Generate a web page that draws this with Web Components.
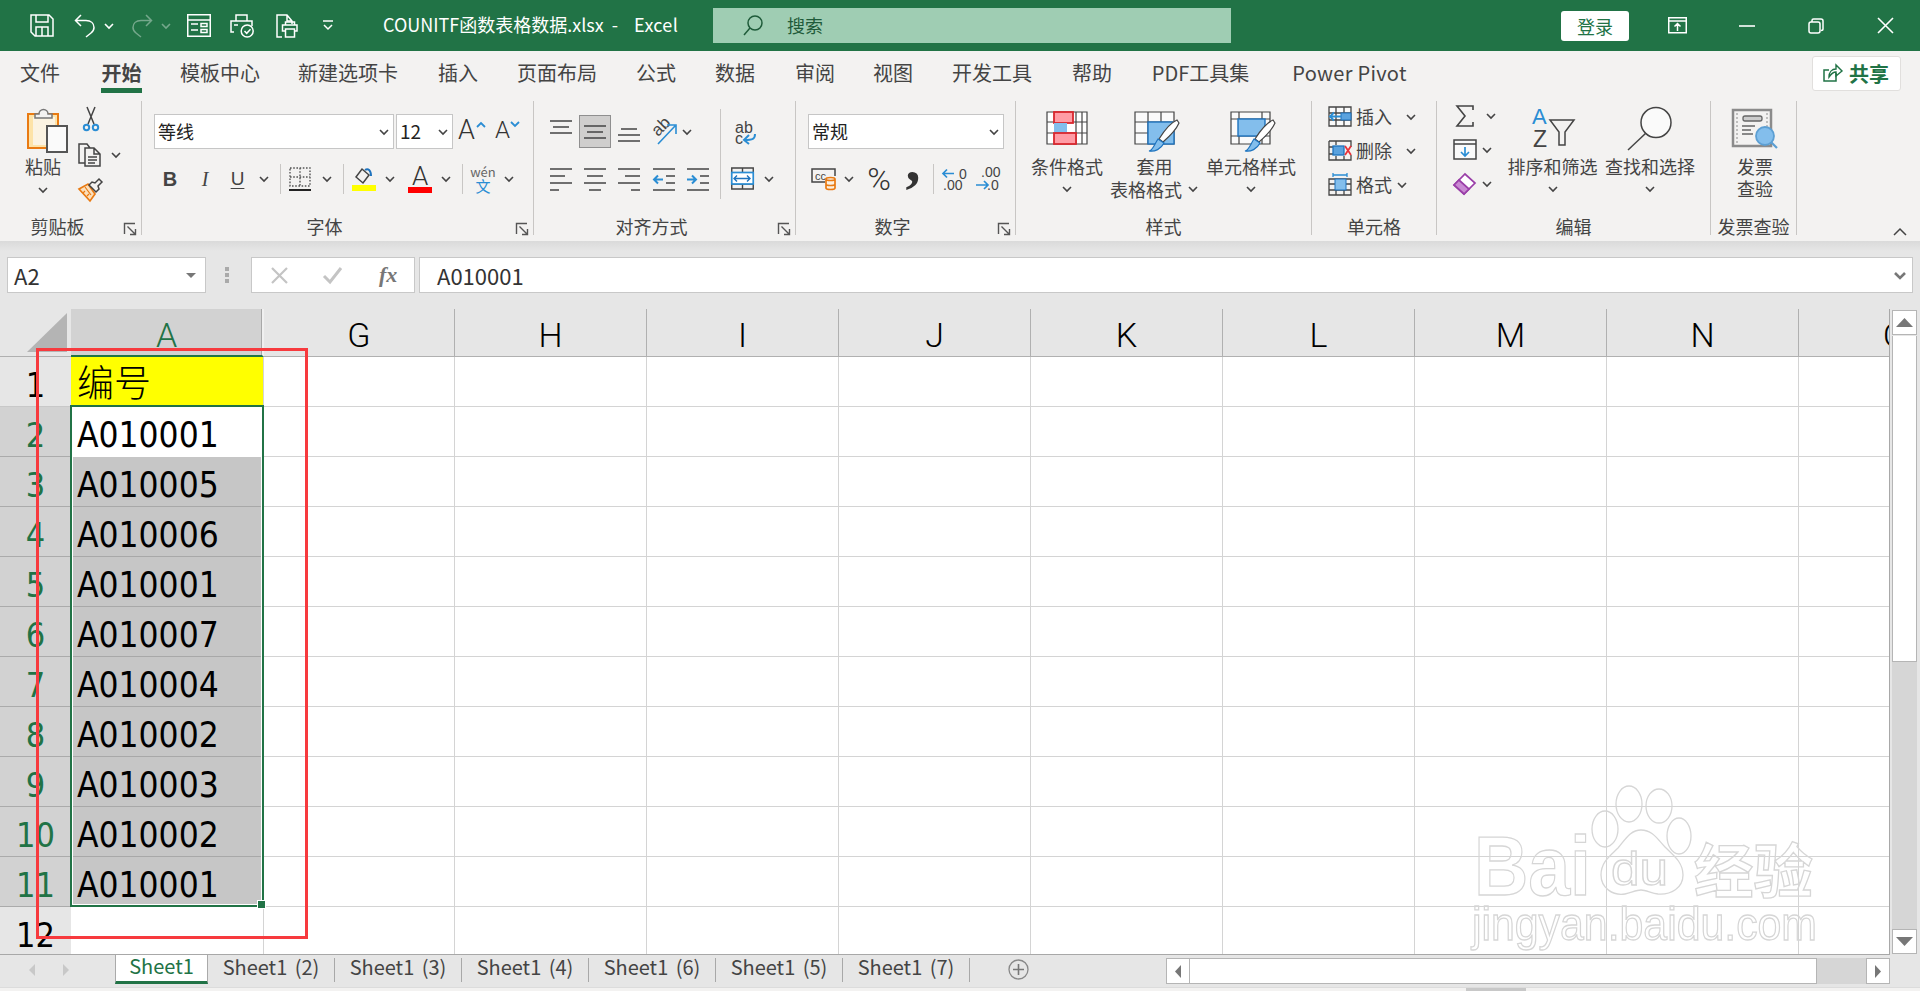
<!DOCTYPE html>
<html lang="zh"><head><meta charset="utf-8"><title>Excel</title>
<style>
html,body{margin:0;padding:0;height:991px;overflow:hidden;background:#e6e6e6;font-family:"Noto Sans CJK SC","Noto Sans",sans-serif}
x-app{display:block}
</style></head><body>
<x-app></x-app>
<script>
const B='#2a8dd4',LB='#83beec',G='#444',O='#e97a12',W='#fff';
const ln=(a,c=G,w=1.5)=>`<path d="${a}" stroke="${c}" stroke-width="${w}" fill="none"/>`;
const txt=(s,x,y,sz,c=G,extra='')=>`<text x="${x}" y="${y}" font-size="${sz}" fill="${c}" ${extra}>${s}</text>`;
const brush=(dx=0,dy=0)=>`<g transform="translate(${dx} ${dy})"><path d="M45 12 L43 9 C36 12 30 20 25 28 L29 31 C36 25 42 19 45 12z" fill="#fff" stroke="${G}" stroke-width="1.2"/><path d="M15 40 C19 39 20 34 24 28 L30 32 C27 38 21 41 15 40z" fill="${LB}" stroke="#1e73be" stroke-width="1.2"/></g>`;
const ICONS={
save:ln('M1 1h18l4 4v17H5l-4-4z M6 1v7h12V1 M6 22v-9h12v9 M12 13v9',W),
undo:ln('M7 1L1.5 6.5 7 12 M2 6.500h10c5 0 8 3 8 7 0 2.500-1 4-3 5.500l-5 4',W),
redo:`<g opacity=".38">${ln('M15 1l5.500 5.500L15 12 M20 6.500H10c-5 0-8 3-8 7 0 2.500 1 4 3 5.500l5 4',W)}</g>`,
wchev:ln('M1 1l4 4 4-4',W,1.6),
wchevd:`<g opacity=".38">${ln('M1 1l4 4 4-4',W,1.6)}</g>`,
form:ln('M.75 .75h22.5v21.500H.75z M.75 6h22.500',W)+`<path d="M4 10h7M4 16h7M14 9.500h6v3h-6zM14 15.500h6v3h-6z" stroke="#fff" stroke-width="1.5" fill="none"/>`,
print:ln('M6 7V1h11v6 M4 18H1V7h21v5 M4 11h4',W)+ln('M11.200 17a6 6 0 1 0 12 0a6 6 0 1 0-12 0 M14.500 17l2.200 2.300 3.800-4',W),
docp:ln('M6 23H1V1h10l5 6v3 M11 1v6h5',W)+ln('M9 17H6.500v-6H21v6h-2.500 M9.500 11V8h9v3 M9.500 15h9v8h-9z',W),
more:ln('M1 1h10',W)+ln('M2 5l4 4 4-4',W),
search:ln('M1 20l6-7',"#1f5b3a",1.5)+`<circle cx="12" cy="8" r="7" stroke="#1f5b3a" stroke-width="1.5" fill="none"/>`,
rdisp:ln('M.75 .75h17.500v15H.75z M.75 4h17.500 M9.500 14V7 M6.500 9.500l3-3 3 3',W),
min:ln('M0 1h16',W,1.6),
rest:ln('M4 4V2.500Q4 1 5.500 1H13q2 0 2 2v8q0 1.500-2 1.500',W)+ln('M1 6q0-2 2-2h7q2 0 2 2v7q0 2-2 2H3q-2 0-2-2z',W),
close:ln('M1 1l15 15M16 1L1 16',W,1.6),
share:`<path d="M13 9v8H1V6h5" stroke="#217346" stroke-width="1.5" fill="none"/><path d="M6 13c0-5 3-8 7-8V1l6 6-6 5V8c-3 0-5 2-7 5z" stroke="#217346" stroke-width="1.4" fill="none"/>`,
paste:`<rect x="1" y="7" width="30" height="34" fill="#fde3a8" stroke="${O}" stroke-width="2"/><rect x="6" y="10" width="22" height="28" fill="#fbf3e2"/><path d="M8 11V7h4a4.500 4.500 0 0 1 9 0h4v4z" fill="#f3f2f1" stroke="#777" stroke-width="1.500"/><rect x="20" y="19" width="20" height="26" fill="#fafafa" stroke="#555" stroke-width="2"/>`,
sciss:ln('M5 17L12 0 M11 17L4 0')+`<circle cx="3.500" cy="20.500" r="2.700" stroke="${B}" stroke-width="2" fill="none"/><circle cx="12.500" cy="20.500" r="2.700" stroke="${B}" stroke-width="2" fill="none"/>`,
copy:ln('M7 20H1V1h8l3 4 M7 5h9l6 6v12H7z M16 5v6h6 M10 14h9M10 17h9M10 20h7'),
paint:`<path d="M1 10l9-5 7 10-5 7z" fill="#fbe0bd" stroke="${O}" stroke-width="1.700"/><path d="M5 14l2-2M9 17l2-2M7 8l6 8" stroke="${O}" stroke-width="1.200" fill="none"/><path d="M11 6l3-3 3 1 4-4 3 3-4 4 1 3-3 3z" fill="#f3f2f1" stroke="${G}" stroke-width="1.500"/>`,
up:ln('M1 5l4-4 4 4',B,1.800),dn:ln('M1 1l4 4 4-4',B,1.800),
chev:ln('M1 1l4 4 4-4',G,1.600),
cup:ln('M1 7l6-6 6 6','#444',1.500),
lau:ln('M.5 11V.5H11 M3.500 3.500l8 8 M11.500 6v5.500H6','#555',1.400),
border:`<path d="M1 1h20v18H1z M11 1v18 M1 10h20" stroke="#555" stroke-width="1.400" stroke-dasharray="1.600 1.600" fill="none"/><path d="M0 23h22" stroke="#222" stroke-width="2"/>`,
fill:`<path d="M4 10l6-8 7 6-6 8z" fill="#f3f2f1" stroke="${G}" stroke-width="1.500"/><path d="M13 3c3-2 6 0 6 6" stroke="#1e73be" stroke-width="2" fill="none"/><rect x="0" y="18" width="24" height="6" fill="#ffff00"/>`,
alt:ln('M0 1h22M3 7h16M0 13h22'),
alm:ln('M0 1h22M3 7h16M0 13h22'),
alb:ln('M3 1h16M0 7h22M0 13h22'),
l:ln('M0 1h22M0 8h15M0 15h22M0 22h9'),c:ln('M0 1h22M3 8h16M0 15h22M5 22h12'),r:ln('M0 1h22M7 8h15M0 15h22M13 22h9'),
out:ln('M0 1h22M13 8h9M13 15h9M0 22h22')+ln('M1 11.500h9M5 7.500l-4 4 4 4',B,2),
ind:ln('M0 1h22M13 8h9M13 15h9M0 22h22')+ln('M0 11.500h9M5 7.500l4 4-4 4',B,2),
orient:txt('ab',0,0,17,G,'transform="translate(6 17) rotate(-45)"')+ln('M6 24L23 6 M15 5h9v9',B,1.600),
wrap:txt('ab',0,12,16,G)+txt('c',0,23,16,G)+ln('M20 13c0 5-2 6-11 6 M14 14l-5 5 5 4',B,2),
merge:`<path d="M.75 1h21.500v21H.75zM.75 6h21.500M.75 17h21.500M11.500 1v5M11.500 17v5" stroke="${G}" stroke-width="1.400" fill="none"/><rect x=".75" y="5.500" width="21.500" height="11.500" fill="#fff" stroke="${B}" stroke-width="1.700"/>${ln('M3 11.500h16M6 8.500l-3 3 3 3M16 8.500l3 3-3 3','#1e73be',1.400)}`,
acc:`<path d="M14 14H1V1h23v7" stroke="${G}" stroke-width="1.500" fill="none"/>${txt('cc',4,12,11,G)}<path d="M15 11c0-2 9-2 9 0v9c0 2-9 2-9 0zM15 11c0 2 9 2 9 0M15 16c0 2 9 2 9 0" fill="#fdf0df" stroke="${O}" stroke-width="1.700"/>`,
dec:txt('0',17,12,14)+txt('.00',1,23,14)+ln('M1 6.500h11M5 2.500l-4 4 4 4',B,1.700),
inc:txt('.00',5,10,14)+txt('.0',11,23,14)+ln('M0 18h12M8 14l4 4-4 4',B,1.700),
cf:`<path d="M1 1h40v32H1zM1 11h40M1 22h40M9 1v32M30 1v32M36 1v32" stroke="${G}" stroke-width="1.200" fill="#fff"/><rect x="8" y="1" width="19" height="11" fill="#ff9ca5" stroke="#d9272e" stroke-width="1.800"/><rect x="8" y="12" width="13" height="10" fill="${LB}"/><rect x="8" y="22" width="22" height="11" fill="#ff9ca5" stroke="#d9272e" stroke-width="1.800"/>`,
tf:`<path d="M1 1h39v32H1zM1 11h39M1 22h39M14 1v32M27 1v32" stroke="${G}" stroke-width="1.200" fill="#fafafa"/><rect x="14" y="11" width="26" height="22" fill="${LB}" stroke="#1e73be" stroke-width="1.400"/>${brush(0,0)}`,
cs:`<path d="M1 1h39v32H1zM1 8h39M1 25h39M9 1v32M32 1v32" stroke="${G}" stroke-width="1.200" fill="#fafafa"/><rect x="8" y="8" width="27" height="17" fill="${LB}" stroke="#1e73be" stroke-width="1.400"/>${brush(0,0)}`,
ins:`<path d="M1 1h22v19H1zM1 7h22M1 14h22M8 1v19M16 1v19" stroke="${G}" stroke-width="1.300" fill="#fafafa"/><rect x="13" y="7" width="10" height="7" fill="#5aa2de" stroke="#1e73be"/>${ln('M2 10.500h11M6 6.500l-4 4 4 4',B,1.800)}`,
del:`<path d="M1 1h22v6M1 1v19h22v-5M1 7h8M1 14h8M8 1v4M16 16v4M8 16v4" stroke="${G}" stroke-width="1.300" fill="none"/><rect x="5" y="6" width="11" height="9" fill="#5aa2de" stroke="#1e73be" stroke-width="1.300"/>${ln('M17 6l6 9M23 6l-6 9','#e8333a',1.800)}`,
fmt:`<path d="M1 6h22v16H1zM1 11h22M1 17h22M8 6v16M16 6v16" stroke="${G}" stroke-width="1.300" fill="none"/><rect x="7" y="6" width="11" height="11" fill="${LB}" stroke="#1e73be"/>${ln('M5 2h14M5 0v4M19 0v4',B,1.300)}`,
sum:ln('M17 5V1H1l8 10-8 10h16v-4',G,1.600),
fd:`<path d="M1 1h22v19H1zM1 5h22" stroke="${G}" stroke-width="1.500" fill="#fafafa"/>${ln('M12 8v9M8 13l4 4 4-4',B,1.700)}`,
eras:`<path d="M1 12L12 1l10 9-11 11z" fill="#fff" stroke="#9a3fa8" stroke-width="1.700"/><path d="M1 12l5-5 10 9-5 5z" fill="#c98ad3" stroke="#9a3fa8" stroke-width="1.700"/>`,
sort:txt('A',0,16,22,B)+txt('Z',1,39,23,G)+ln('M18 12h24L33 24v13h-6V24z',G,1.500),
find:`<circle cx="29" cy="15.500" r="15" fill="#fafafa" stroke="${G}" stroke-width="1.500"/>`+ln('M1 43L19 26',G,1.500),
inv:`<path d="M1 1h38v36H1z" fill="#f3f2f1" stroke="#8b8b8b" stroke-width="2.500"/><path d="M5 4v32M35 4v32" stroke="#8b8b8b" stroke-width="1" stroke-dasharray="2 2"/><rect x="11" y="7" width="19" height="5" rx="2" fill="#ccc" stroke="#666" stroke-width="1.300"/>${ln('M10 17h13M10 21h9M10 25h11','#666',1.500)}<circle cx="33" cy="27" r="9" fill="${LB}" stroke="#5c9fd3" stroke-width="1.800"/>${ln('M39 33l6 6','#5c9fd3',2.200)}`,
tri:`<path d="M0 0h10L5 5z" fill="#777"/>`,
triu:`<path d="M0 9h17L8.500 0z" fill="#777"/>`,trid:`<path d="M0 0h17L8.500 9z" fill="#777"/>`,
tril:`<path d="M6 0v13L0 6.500z" fill="#777"/>`,trir:`<path d="M0 0v13l6-6.500z" fill="#777"/>`,
navl:`<path d="M6 0v12L0 6z" fill="#c8c8c8"/>`,navr:`<path d="M0 0v12l6-6z" fill="#c8c8c8"/>`,
fchev:ln('M1 1l5 5 5-5','#777',2.600),
plus:`<circle cx="10.500" cy="10.500" r="9.500" fill="none" stroke="#888" stroke-width="1.300"/>`+ln('M10.500 5v11M5 10.500h11','#777',1.600),
x:ln('M1 1l15 15M16 1L1 16','#c4c4c4',2.200),
chk:ln('M1 10l6 6L18 2','#c4c4c4',3),
corner:`<path d="M40 0V39H0z" fill="#b4b4b4"/>`,
};
class XIcon extends HTMLElement{connectedCallback(){if(this.shadowRoot)return;const n=this.getAttribute('n'),w=+this.getAttribute('w'),h=+this.getAttribute('h');this.attachShadow({mode:'open'}).innerHTML=`<style>:host{display:block;flex:none;width:${w}px;height:${h}px}svg{display:block;overflow:visible;font-family:"Liberation Sans",sans-serif}</style><svg width="${w}" height="${h}" viewBox="0 0 ${w} ${h}">${ICONS[n]||''}</svg>`;}}
customElements.define('x-icon',XIcon);
const I=(n,w,h,st='')=>`<x-icon n="${n}" w="${w}" h="${h}" style="${st}"></x-icon>`;
const cv=I('chev',10,6);
const T=(s,st='')=>`<span style="white-space:nowrap;line-height:24px;${st}">${s}</span>`;
const R=(x0,items)=>{let c=x0,o='';for(const [x,w,h] of items){o+=`<div style="flex:none;display:flex;align-items:center;justify-content:center;margin-left:${x-c}px;width:${w}px;height:100%">${h}</div>`;c=x+w;}return `<div style="display:flex;align-items:center;height:100%;width:100%">${o}</div>`;};
const V=(y0,items)=>{let c=y0,o='';for(const [y,h,ht] of items){o+=`<div style="flex:none;display:flex;align-items:center;justify-content:center;margin-top:${y-c}px;height:${h}px;width:100%">${ht}</div>`;c=y+h;}return `<div style="display:flex;flex-direction:column;width:100%;height:100%">${o}</div>`;};

class XTitlebar extends HTMLElement{connectedCallback(){this.attachShadow({mode:'open'}).innerHTML=`<style>:host{display:block;height:51px;background:#217346;color:#fff;font-size:18px}
.search{width:518px;height:35px;background:#9fcdb3;display:flex;align-items:center;color:#1f5b3a}
.login{width:68px;height:30px;background:#fff;border-radius:3px;color:#217346;display:flex;align-items:center;justify-content:center}</style>`+R(0,[
[30,24,I('save',24,23)],[74,22,I('undo',22,24)],[104,10,I('wchev',10,6)],[131,22,I('redo',22,24)],[161,10,I('wchevd',10,6)],
[187,24,I('form',24,23)],[230,24,I('print',24,24)],[276,22,I('docp',22,24)],[322,12,I('more',12,11)],
[383,300,`<span style="white-space:nowrap;width:100%;line-height:24px;margin-bottom:3px">COUNITF函数表格数据.xlsx&nbsp;&nbsp;-&nbsp;&nbsp;<span style="margin-left:8px;letter-spacing:.3px">Excel</span></span>`],
[713,518,`<div class="search">${I('search',20,21,'margin-left:30px')}<span style="margin:0 0 2px 24px">搜索</span></div>`],
[1561,68,`<div class="login">登录</div>`],
[1668,19,I('rdisp',19,17)],[1739,16,I('min',16,2)],[1808,16,I('rest',16,16)],[1877,17,I('close',17,17)]
]);}}
customElements.define('x-titlebar',XTitlebar);

class XTabs extends HTMLElement{connectedCallback(){const tab=(s,on)=>`<span class="tab${on?' on':''}">${s}</span>`;
this.attachShadow({mode:'open'}).innerHTML=`<style>:host{display:block;height:44px;padding-bottom:6px;background:#f3f2f1;color:#444;font-size:20px}
.tab{white-space:nowrap;line-height:28px}
.on{font-weight:700;align-self:flex-start;margin-top:8px;height:29px;border-bottom:5px solid #217346;width:41px;display:block;text-align:center;box-sizing:content-box}
.sh{width:89px;height:35px;box-sizing:border-box;background:#fff;border:1px solid #e1dfdd;border-radius:3px;display:flex;align-items:center;color:#217346;font-weight:700}</style>`+R(0,[
[20,40,tab('文件')],[101,41,tab('开始',1)],[180,80,tab('模板中心')],[298,100,tab('新建选项卡')],[438,40,tab('插入')],[517,80,tab('页面布局')],[636,40,tab('公式')],[715,40,tab('数据')],[795,40,tab('审阅')],[873,40,tab('视图')],[952,80,tab('开发工具')],[1072,40,tab('帮助')],[1152,97,tab('PDF工具集')],[1291,117,`<span class="tab" style="letter-spacing:.3px">Power Pivot</span>`],
[1812,89,`<div class="sh">${I('share',19,18,'margin-left:10px')}<span style="margin-left:7px">共享</span></div>`]
]);}}
customElements.define('x-tabs',XTabs);

class XGroup extends HTMLElement{connectedCallback(){const l=this.getAttribute('label'),la=this.hasAttribute('launcher');
this.attachShadow({mode:'open'}).innerHTML=`<style>:host{display:block;flex:none;height:134px;box-sizing:border-box;border-right:1px solid #c8c6c4}
.c{height:116px}.f{height:18px;display:flex;align-items:center}.f span{flex:1;text-align:center;line-height:18px;white-space:nowrap}</style><div class="c"><slot></slot></div><div class="f"><span>${l}</span>${la?I('lau',12,12,'margin:6px 5px 0 9px'):''}</div>`;}}
customElements.define('x-group',XGroup);

class XCombo extends HTMLElement{connectedCallback(){this.attachShadow({mode:'open'}).innerHTML=`<style>:host{display:flex;align-items:center;box-sizing:border-box;height:35px;width:100%;background:#fff;border:1.500px solid #c6c6c6;padding:0 4px 0 3px;color:#222;font-size:18px}span{flex:1;white-space:nowrap;margin-bottom:2px}</style><span><slot></slot></span>${cv}`;}}
customElements.define('x-combo',XCombo);

class XRibbon extends HTMLElement{connectedCallback(){
const sep=`<div style="width:1px;height:30px;background:#c8c6c4"></div>`;
const gClip=`<x-group style="width:142px" label="剪贴板" launcher>`+R(0,[
[23,40,V(101,[[107,45,I('paste',40,45,'margin-left:8px')],[154,24,T('粘贴')],[187,6,cv]])],
[78,44,V(101,[[107,24,`<div style="width:100%">${I('sciss',16,24,'margin-left:5px')}</div>`],[143,24,R(78,[[78,23,I('copy',23,24)],[111,10,cv]])],[179,22,`<div style="width:100%">${I('paint',24,22)}</div>`]])]
])+`</x-group>`;
const gFont=`<x-group style="width:392px" label="字体" launcher>`+V(101,[
[114,35,R(142,[[154,240,`<x-combo>等线</x-combo>`],[396,57,`<x-combo style="font-size:19px">12</x-combo>`],[460,24,`<span style="font:300 27px Roboto,sans-serif;line-height:30px;color:#333;margin-bottom:4px">A</span>${I('up',10,6,'margin:-14px 0 0 1px')}`],[497,21,`<span style="font:300 24px Roboto,sans-serif;line-height:30px;color:#333;margin-bottom:4px">A</span>${I('dn',10,6,'margin:-16px 0 0 0')}`]])],
[163,32,R(142,[[164,12,`<span style="font:700 20px 'Liberation Sans',sans-serif;color:#444">B</span>`],[200,10,`<span style="font:italic 20px 'Liberation Serif',serif;color:#444">I</span>`],[231,13,`<span style="font:19px 'Liberation Sans',sans-serif;color:#444;text-decoration:underline;text-underline-offset:3px">U</span>`],[259,10,cv],[280,1,sep],[289,22,I('border',22,24)],[322,10,cv],[343,1,sep],[352,24,I('fill',24,24)],[385,10,cv],[408,24,`<div style="display:flex;flex-direction:column;align-items:center;width:100%"><span style="font:300 26px Roboto,sans-serif;line-height:20px;color:#333">A</span><div style="width:24px;height:6px;background:#ff0000;margin-top:1px"></div></div>`],[441,10,cv],[462,1,sep],[472,22,`<div style="display:flex;flex-direction:column;align-items:center"><span style="font-size:13px;line-height:13px;color:#666">wén</span><span style="font-size:15px;line-height:15px;color:${B}">文</span></div>`],[504,10,cv]])]
])+`</x-group>`;
const gAlign=`<x-group style="width:262px" label="对齐方式" launcher>`+R(534,[
[550,170,V(101,[
 [114,35,R(550,[[550,22,I('alt',22,14,'margin-top:-9px')],[579,32,`<div style="width:32px;height:33px;box-sizing:border-box;background:#cfcecd;border:1.500px solid #8f8f8f;display:flex;align-items:center;justify-content:center">${I('alm',22,14)}</div>`],[618,22,I('alb',22,14,'margin-top:7px')],[652,24,I('orient',24,24)],[682,10,cv]])],
 [163,32,R(550,[[550,22,I('l',22,23)],[584,22,I('c',22,23)],[618,22,I('r',22,23)],[653,22,I('out',22,23)],[687,22,I('ind',22,23)]])]
])],
[720,1,`<div style="width:1px;height:90px;margin-top:-10px;background:#c8c6c4"></div>`],
[731,50,V(101,[[121,22,`<div style="width:100%">${I('wrap',21,23,'margin-left:4px')}</div>`],[167,23,R(731,[[731,23,I('merge',23,23)],[764,10,cv]])]])]
])+`</x-group>`;
const gNum=`<x-group style="width:220px" label="数字" launcher>`+V(101,[
[114,35,R(796,[[808,196,`<x-combo>常规</x-combo>`]])],
[163,32,R(796,[[811,24,I('acc',24,22)],[844,10,cv],[866,26,`<span style="font:300 32px Roboto,sans-serif;color:#333">%</span>`],[907,12,`<span style="font:700 60px 'Liberation Serif',serif;line-height:32px;color:#333;margin-bottom:37px">,</span>`],[933,1,sep],[942,24,I('dec',24,24)],[976,24,I('inc',24,24)]])]
])+`</x-group>`;
const gStyle=`<x-group style="width:296px" label="样式">`+R(1016,[
[1031,72,V(101,[[111,34,R(1031,[[1046,42,I('cf',42,34)]])],[154,24,T('条件格式')],[186,6,cv]])],
[1110,92,V(101,[[111,41,R(1110,[[1134,46,I('tf',46,41)]])],[154,24,R(1110,[[1137,35,T('套用')]])],[177,24,R(1110,[[1110,72,T('表格格式')],[1188,10,cv]])]])],
[1206,90,V(101,[[111,41,R(1206,[[1230,45,I('cs',45,41)]])],[154,24,T('单元格样式')],[186,6,cv]])]
])+`</x-group>`;
const cell=(y,h,ic,s,cx)=>[y,h,R(1312,[[1328,24,I(ic,24,h)],[1356,36,T(s,'margin-bottom:2px')],[cx,10,cv]])];
const gCells=`<x-group style="width:125px" label="单元格">`+V(101,[cell(106,21,'ins','插入',1406),cell(140,21,'del','删除',1406),cell(173,23,'fmt','格式',1397)])+`</x-group>`;
const gEdit=`<x-group style="width:274px" label="编辑">`+R(1437,[
[1453,44,V(101,[[105,22,R(1453,[[1456,18,I('sum',18,22)],[1486,10,cv]])],[139,21,R(1453,[[1453,24,I('fd',24,21)],[1482,10,cv]])],[173,22,R(1453,[[1453,23,I('eras',23,22)],[1482,10,cv]])]])],
[1508,89,V(101,[[108,40,R(1508,[[1532,42,I('sort',42,40)]])],[154,24,T('排序和筛选')],[186,6,cv]])],
[1605,90,V(101,[[107,44,R(1605,[[1627,44,I('find',44,44)]])],[154,24,T('查找和选择')],[186,6,cv]])]
])+`</x-group>`;
const gInv=`<x-group style="width:86px" label="发票查验">`+R(1711,[[1732,46,V(101,[[109,40,I('inv',46,40)],[154,24,T('发票')],[176,24,T('查验')]])]])+`</x-group>`;
this.attachShadow({mode:'open'}).innerHTML=`<style>:host{display:block;height:140px;background:#f3f2f1;color:#444;font-size:18px}.w{display:flex;height:134px;align-items:flex-start}</style>
<div class="w">${gClip}${gFont}${gAlign}${gNum}${gStyle}${gCells}${gEdit}${gInv}${I('cup',14,8,'margin:127px 0 0 96px')}</div>`;
}}
customElements.define('x-ribbon',XRibbon);

class XFormula extends HTMLElement{connectedCallback(){this.attachShadow({mode:'open'}).innerHTML=`<style>:host{display:block;height:52px;font-size:22px;color:#333;background:linear-gradient(#dadada,#e6e6e6 10px)}
.o{display:flex;padding-top:16px;height:36px;box-sizing:content-box;padding-left:7px}.b{box-sizing:border-box;height:36px;background:#fff;border:1.500px solid #c8c8c8;display:flex;align-items:center;flex:none}
.dots{width:4px;margin:0 22px 0 19px;display:flex;flex-direction:column;gap:2px;justify-content:center}.dots i{display:block;width:4px;height:4px;background:#aaa}</style>
<div class="o"><div class="b" style="width:199px;padding:0 9px 0 6px"><span style="flex:1">A2</span>${I('tri',10,5)}</div><div class="dots"><i></i><i></i><i></i></div>
<div class="b" style="width:164px">${I('x',17,17,'margin-left:19px')}${I('chk',19,18,'margin-left:35px')}<span style="font:italic 700 22px 'Liberation Serif',serif;color:#777;margin-left:37px">fx</span></div>
<div class="b" style="width:1494px;margin-left:4px;padding:0 6px 0 17px"><span style="flex:1">A010001</span>${I('fchev',12,7)}</div></div>`;}}
customElements.define('x-formula',XFormula);

class XSheet extends HTMLElement{connectedCallback(){
const data=['A010001','A010005','A010006','A010001','A010007','A010004','A010002','A010003','A010002','A010001'];
const cols=['G','H','I','J','K','L','M','N'];
let g=`<div class="hd corner">${I('corner',40,39,'margin:4px 0 0 27px')}</div><div class="hd ca">A</div>`+cols.map(c=>`<div class="hd">${c}</div>`).join('')+`<div class="hd ho">O</div>`;
for(let r=1;r<=12;r++){const sel=r>=2&&r<=11;
 g+=`<div class="rh${sel?' rs':''}">${r}</div>`;
 if(r==1)g+=`<div class="c a1">编号</div>`;
 else if(r==2)g+=`<div class="c act">${data[0]}</div>`;
 else if(sel)g+=`<div class="c s">${data[r-2]}</div>`;
 else g+=`<div class="c"></div>`;
 for(let i=0;i<9;i++)g+=`<div class="c"></div>`;
}
const F=`"DejaVu Sans Condensed",Roboto,"Liberation Sans",sans-serif`;
this.attachShadow({mode:'open'}).innerHTML=`<style>:host{display:flex;height:646px;background:#e6e6e6;position:relative}
.g{display:grid;flex:none;width:1890px;height:646px;overflow:hidden;grid-template-columns:71px 193px 191px repeat(7,192px) 92px;grid-template-rows:48px repeat(11,50px) 48px;box-sizing:border-box;border-bottom:1px solid #a8a8a8;border-right:1px solid #a8a8a8}
.hd{box-sizing:border-box;background:#e6e6e6;border-right:1px solid #b0b0b0;border-bottom:1px solid #b0b0b0;text-align:center;font:300 34px/53px Roboto,"Liberation Sans",sans-serif;color:#000;overflow:hidden}
.ho{text-align:left;padding-left:84px;border-right:0}
.corner{border-right:0}
.ca{background:#d2d2d2;color:#217346;border-bottom:2px solid #217346;border-right:2px solid #f0f0f0;box-shadow:inset -1px 0 #a8a8a8}
.rh{box-sizing:border-box;background:#e6e6e6;border-bottom:1px solid #c8c8c8;text-align:center;font:300 34px/57px ${F};color:#000;overflow:hidden}
.rs{background:#d2d2d2;color:#217346;border-bottom-color:#ababab}
.c{box-sizing:border-box;background:#fff;border-right:1px solid #d4d4d4;border-bottom:1px solid #d4d4d4;padding-left:6px;font:300 35px/56px ${F};color:#000;overflow:hidden;white-space:nowrap}
.a1{background:#ff0;font:300 37px/48px "Noto Sans CJK SC",sans-serif;padding-left:6px;overflow:visible}
.s{background:#c6c6c6;border-bottom-color:#a8a8a8;border-right-color:#c6c6c6}
.act{background:#fff;border-color:#fff}
.sel{position:absolute;left:70px;top:96px;width:194px;height:502px;box-sizing:border-box;border:2px solid #217346;box-shadow:inset 0 0 0 1px #fff;pointer-events:none}
.h{position:absolute;right:-3px;bottom:-3px;width:7px;height:7px;background:#217346;box-sizing:border-box;outline:1px solid #fff}
.v{flex:1;display:flex;flex-direction:column;padding:1px 3px 0 2px}
.btn{box-sizing:border-box;flex:none;background:#fff;border:1.500px solid #b5b5b5;display:flex;align-items:center;justify-content:center}
.tr{background:#d6d6d6;flex:1}
</style><div class="g">${g}</div><div class="sel"><div class="h"></div></div>
<div class="v"><div class="btn" style="height:25px">${I('triu',17,9)}</div><div class="btn" style="height:326px;margin-top:1px;border-top:0"></div><div class="tr"></div><div class="btn" style="height:25px;margin-bottom:1px">${I('trid',17,9)}</div></div>`;
}}
customElements.define('x-sheet',XSheet);

class XSheetTabs extends HTMLElement{connectedCallback(){
const names=['(2)','(3)','(4)','(6)','(5)','(7)'];
let t=names.map(n=>`<div class="t">Sheet1 ${n}</div>`).join('');
this.attachShadow({mode:'open'}).innerHTML=`<style>:host{display:flex;height:32px;background:#e6e6e6;font-size:20px;word-spacing:3px;color:#444;align-items:flex-start}
.nav{width:115px;height:29px;display:flex;align-items:center;flex:none;padding-left:29px;box-sizing:border-box}
.a{flex:none;width:93px;height:29px;box-sizing:border-box;background:#fff;color:#217346;border-bottom:3px solid #217346;text-align:center;line-height:22px;border-left:1px solid #aaa;border-right:1px solid #aaa}
.t{flex:none;width:127px;height:24px;margin-top:3px;line-height:17px;text-align:center;border-right:1px solid #a8a8a8;box-sizing:border-box;white-space:nowrap}
.plus{margin:4px 0 0 38px;flex:none}
.hs{display:flex;flex:none;margin:3px 0 0 137px;height:26px}
.btn{box-sizing:border-box;background:#fff;border:1.500px solid #b5b5b5;display:flex;align-items:center;justify-content:center;flex:none}
</style><div class="nav">${I('navl',6,12)}${I('navr',6,12,'margin-left:28px')}</div><div class="a">Sheet1</div>${t}
<div class="plus">${I('plus',21,21)}</div>
<div class="hs"><div class="btn" style="width:24px">${I('tril',6,13)}</div><div class="btn" style="width:627px;border-left:0"></div><div style="width:49px;background:#d6d6d6"></div><div class="btn" style="width:24px">${I('trir',6,13)}</div></div>`;}}
customElements.define('x-sheettabs',XSheetTabs);

class XStatus extends HTMLElement{connectedCallback(){this.attachShadow({mode:'open'}).innerHTML=`<style>:host{display:block;height:4px;background:#f3f2f1;border-top:1px solid #dcdcdc;box-sizing:border-box}div{margin-left:1466px;width:60px;height:3px;background:#c8c8c8}</style><div></div>`;}}
customElements.define('x-status',XStatus);

class XAnnotation extends HTMLElement{connectedCallback(){this.attachShadow({mode:'open'}).innerHTML=`<style>:host{position:absolute;left:36px;top:348px;width:272px;height:591px;box-sizing:border-box;border:3px solid #f73a3e;pointer-events:none}</style>`;}}
customElements.define('x-annotation',XAnnotation);

class XWatermark extends HTMLElement{connectedCallback(){this.attachShadow({mode:'open'}).innerHTML=`<style>:host{position:absolute;left:1460px;top:785px;width:370px;height:175px;pointer-events:none}svg{display:block;filter:blur(.4px)}text{fill:none;stroke:#d6d6d6;stroke-width:1.300px;paint-order:stroke}</style>
<svg width="370" height="175" viewBox="0 0 370 175">
<text x="14" y="110" font-family="Liberation Sans" font-weight="700" font-size="84" textLength="117" lengthAdjust="spacingAndGlyphs">Bai</text>
<g fill="none" stroke="#d6d6d6" stroke-width="1.300"><ellipse cx="169" cy="19" rx="13" ry="18"/><ellipse cx="199" cy="21" rx="13" ry="17"/><ellipse cx="145" cy="44" rx="13" ry="18"/><ellipse cx="219" cy="51" rx="12" ry="18"/>
<path d="M181 45c-11 0-16 10-23 18-8 8-17 14-17 27 0 13 12 21 24 19 6-1 11-4 16-4s10 3 17 4c13 1 25-6 25-19 0-13-10-20-18-28-7-7-12-17-24-17z"/></g>
<text x="151" y="100" font-family="Liberation Sans" font-size="46" textLength="57" lengthAdjust="spacingAndGlyphs">du</text>
<text x="234" y="108" font-family="Noto Sans CJK SC" font-weight="700" font-size="59" textLength="119" lengthAdjust="spacingAndGlyphs">经验</text>
<text x="12" y="155" font-family="Liberation Sans" font-size="46" textLength="345" lengthAdjust="spacingAndGlyphs">jingyan.baidu.com</text>
</svg>`;}}
customElements.define('x-watermark',XWatermark);

class XApp extends HTMLElement{connectedCallback(){this.attachShadow({mode:'open'}).innerHTML=`<style>:host{display:block;position:relative;width:1920px;height:991px;overflow:hidden;background:#e6e6e6;font-family:"Noto Sans CJK SC","Noto Sans",sans-serif}</style>
<x-titlebar></x-titlebar><x-tabs></x-tabs><x-ribbon></x-ribbon><x-formula></x-formula><div style="height:16px"></div><x-sheet></x-sheet><x-sheettabs></x-sheettabs><x-status></x-status><x-annotation></x-annotation><x-watermark></x-watermark>`;}}
customElements.define('x-app',XApp);
</script></body></html>
